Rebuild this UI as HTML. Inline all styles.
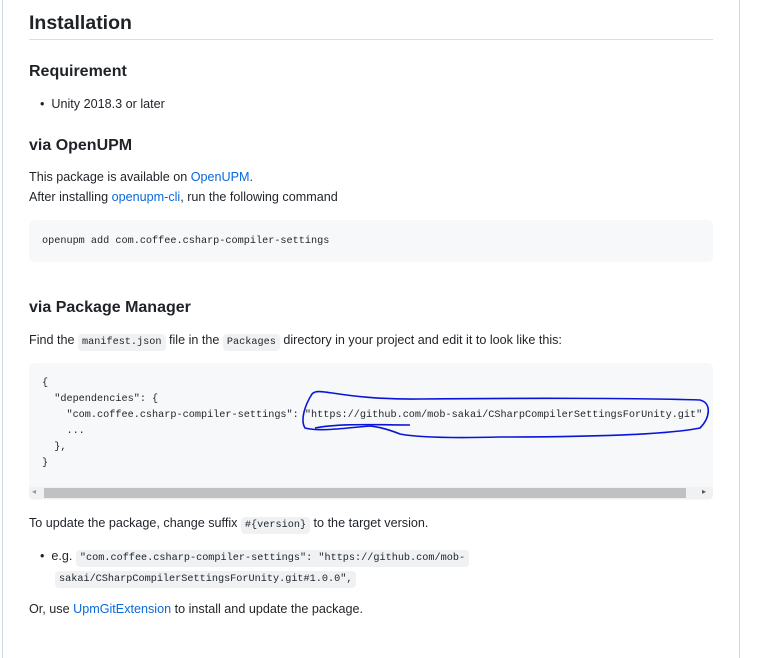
<!DOCTYPE html>
<html><head><meta charset="utf-8"><style>
body{margin:0;width:768px;height:654px;background:#fff;position:relative;overflow:hidden;font-family:"Liberation Sans",sans-serif;color:#1f2328;}
.frame{position:absolute;left:2px;top:-2px;width:736px;height:660px;border-left:1px solid #d0d7de;border-right:1px solid #d0d7de;}
.a{position:absolute;white-space:nowrap;}
.t{font-size:12.6px;}
a{color:#0969da;text-decoration:none;}
.m{font-family:"Liberation Mono",monospace;font-size:10.2px;}
code{font-family:"Liberation Mono",monospace;font-size:10.2px;background:#eff1f3;border-radius:4px;padding:3px 4px;}
.pre{position:absolute;left:29px;width:684px;background:#f6f8fa;border-radius:5px;overflow:hidden;}
</style></head><body>
<div class="frame"></div>
<div class="a" style="left:29px;top:12px;font-size:19.5px;font-weight:600;">Installation</div>
<div class="a" style="left:29px;top:39px;width:684px;height:1px;background:#d8dee4;"></div>
<div class="a" style="left:29px;top:63px;font-size:16px;font-weight:600;">Requirement</div>
<div class="a t" style="left:40px;top:97px;">•&nbsp; Unity 2018.3 or later</div>
<div class="a" style="left:29px;top:137px;font-size:16px;font-weight:600;">via OpenUPM</div>
<div class="a t" style="left:29px;top:170px;">This package is available on <a>OpenUPM</a>.</div>
<div class="a t" style="left:29px;top:190px;">After installing <a>openupm-cli</a>, run the following command</div>
<div class="pre" style="top:220px;height:42px;"><div class="a m" style="left:13px;top:16px;">openupm add com.coffee.csharp-compiler-settings</div></div>
<div class="a" style="left:29px;top:299px;font-size:16px;font-weight:600;">via Package Manager</div>
<div class="a t" style="left:29px;top:333px;">Find the <code>manifest.json</code> file in the <code>Packages</code> directory in your project and edit it to look like this:</div>
<div class="pre" style="top:363px;height:137px;">
<pre class="a m" style="left:13px;top:13px;margin:0;line-height:16px;white-space:pre;">{
  "dependencies": {
    "com.coffee.csharp-compiler-settings": "https://github.com/mob-sakai/CSharpCompilerSettingsForUnity.git"
    ...
  },
}</pre>
<div class="a" style="left:0;top:124px;width:684px;height:12px;background:#f1f1f1;"></div>
<div class="a" style="left:15px;top:125px;width:642px;height:10px;background:#c1c1c1;"></div>
<div class="a" style="left:3px;top:124px;font-size:8px;color:#999;">◂</div>
<div class="a" style="left:673px;top:124px;font-size:8px;color:#555;">▸</div>
</div>
<svg class="a" style="left:0;top:0;" width="768" height="654"><path d="M312 394 C318 386 340 400 420 399 C520 398 640 398 700 400 C712 403 710 418 700 428 C660 436 560 437 500 437 C460 438 420 438 400 434 C390 430 380 427 370 426 C345 428 320 432 305 428 C300 420 305 405 312 394 Z M315 428 C340 423 380 425 410 425" fill="none" stroke="#0a14d8" stroke-width="1.6"/></svg>
<div class="a t" style="left:29px;top:516px;">To update the package, change suffix <code>#{version}</code> to the target version.</div>
<div class="a t" style="left:40px;top:549px;">•&nbsp; e.g. <code>"com.coffee.csharp-compiler-settings": "https://github.com/mob-</code></div>
<div class="a t" style="left:55px;top:570px;"><code>sakai/CSharpCompilerSettingsForUnity.git#1.0.0",</code></div>
<div class="a t" style="left:29px;top:602px;">Or, use <a>UpmGitExtension</a> to install and update the package.</div>
</body></html>
